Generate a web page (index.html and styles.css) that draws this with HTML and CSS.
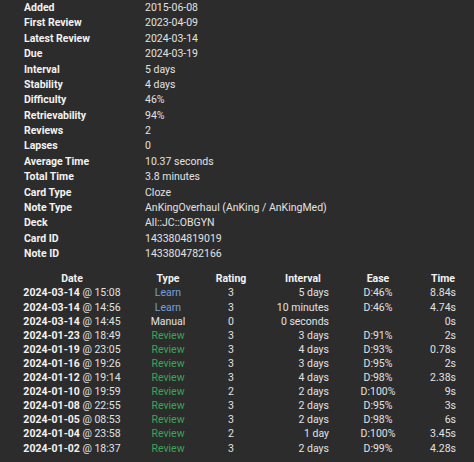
FILE: index.html
```html
<!DOCTYPE html>
<html>
<head>
<meta charset="utf-8">
<link rel="stylesheet" href="styles.css">
</head>
<body>
<div class="page">
  <div class="info">
    <div class="k">Added</div><div class="v">2015-06-08</div>
    <div class="k">First Review</div><div class="v">2023-04-09</div>
    <div class="k">Latest Review</div><div class="v">2024-03-14</div>
    <div class="k">Due</div><div class="v">2024-03-19</div>
    <div class="k">Interval</div><div class="v">5 days</div>
    <div class="k">Stability</div><div class="v">4 days</div>
    <div class="k">Difficulty</div><div class="v">46%</div>
    <div class="k">Retrievability</div><div class="v">94%</div>
    <div class="k">Reviews</div><div class="v">2</div>
    <div class="k">Lapses</div><div class="v">0</div>
    <div class="k">Average Time</div><div class="v">10.37 seconds</div>
    <div class="k">Total Time</div><div class="v">3.8 minutes</div>
    <div class="k">Card Type</div><div class="v">Cloze</div>
    <div class="k">Note Type</div><div class="v">AnKingOverhaul (AnKing / AnKingMed)</div>
    <div class="k">Deck</div><div class="v">All::JC::OBGYN</div>
    <div class="k">Card ID</div><div class="v">1433804819019</div>
    <div class="k">Note ID</div><div class="v">1433804782166</div>
  </div>

  <table class="revlog">
    <colgroup>
      <col class="c-date"><col class="c-type"><col class="c-rating"><col class="c-int"><col class="c-ease"><col class="c-time">
    </colgroup>
    <thead>
      <tr><th>Date</th><th>Type</th><th>Rating</th><th class="h-int">Interval</th><th>Ease</th><th class="h-time">Time</th></tr>
    </thead>
    <tbody>
      <tr><td class="date"><b>2024-03-14</b> @ 15:08</td><td class="learn">Learn</td><td>3</td><td class="int">5 days</td><td>D:46%</td><td class="time">8.84s</td></tr>
      <tr><td class="date"><b>2024-03-14</b> @ 14:56</td><td class="learn">Learn</td><td>3</td><td class="int">10 minutes</td><td>D:46%</td><td class="time">4.74s</td></tr>
      <tr><td class="date"><b>2024-03-14</b> @ 14:45</td><td>Manual</td><td>0</td><td class="int">0 seconds</td><td></td><td class="time">0s</td></tr>
      <tr><td class="date"><b>2024-01-23</b> @ 18:49</td><td class="review">Review</td><td>3</td><td class="int">3 days</td><td>D:91%</td><td class="time">2s</td></tr>
      <tr><td class="date"><b>2024-01-19</b> @ 23:05</td><td class="review">Review</td><td>3</td><td class="int">4 days</td><td>D:93%</td><td class="time">0.78s</td></tr>
      <tr><td class="date"><b>2024-01-16</b> @ 19:26</td><td class="review">Review</td><td>3</td><td class="int">3 days</td><td>D:95%</td><td class="time">2s</td></tr>
      <tr><td class="date"><b>2024-01-12</b> @ 19:14</td><td class="review">Review</td><td>3</td><td class="int">4 days</td><td>D:98%</td><td class="time">2.38s</td></tr>
      <tr><td class="date"><b>2024-01-10</b> @ 19:59</td><td class="review">Review</td><td>2</td><td class="int">2 days</td><td>D:100%</td><td class="time">9s</td></tr>
      <tr><td class="date"><b>2024-01-08</b> @ 22:55</td><td class="review">Review</td><td>3</td><td class="int">2 days</td><td>D:95%</td><td class="time">3s</td></tr>
      <tr><td class="date"><b>2024-01-05</b> @ 08:53</td><td class="review">Review</td><td>3</td><td class="int">2 days</td><td>D:98%</td><td class="time">6s</td></tr>
      <tr><td class="date"><b>2024-01-04</b> @ 23:58</td><td class="review">Review</td><td>2</td><td class="int">1 day</td><td>D:100%</td><td class="time">3.45s</td></tr>
      <tr><td class="date"><b>2024-01-02</b> @ 18:37</td><td class="review">Review</td><td>3</td><td class="int">2 days</td><td>D:99%</td><td class="time">4.28s</td></tr>
    </tbody>
  </table>
</div>
</body>
</html>
```

FILE: styles.css
```css
html, body {
  margin: 0;
  padding: 0;
  background: #2c2c2c;
}
body {
  font-family: Roboto, "Liberation Sans", sans-serif;
  font-size: 10.5px;
  color: #e6e6e6;
}
.page {
  padding: 0 8px 0 16px;
}
.info {
  display: grid;
  grid-template-columns: 121px auto;
  padding-left: 8px;
  line-height: 15.375px;
}
.info .k {
  font-weight: bold;
  color: #f2f2f2;
}
.info .v {
  color: #e2e2e2;
}
.revlog {
  margin-top: 11px;
  border-collapse: collapse;
  table-layout: fixed;
  width: 450px;
}
.c-date { width: 112px; }
.c-type { width: 80px; }
.c-rating { width: 46px; }
.c-int { width: 92px; }
.c-ease { width: 64px; }
.c-time { width: 56px; }
.revlog th, .revlog td {
  padding: 0;
  height: 14.1px;
  line-height: 14.1px;
  text-align: center;
  white-space: nowrap;
}
.revlog th {
  font-weight: bold;
  color: #f2f2f2;
}
.revlog td {
  color: #e2e2e2;
}
.revlog td.date b {
  color: #f2f2f2;
}
.h-int { padding-left: 6px !important; }
.h-time { padding-left: 10px !important; }
.revlog td.int {
  text-align: right;
  padding-right: 17px;
}
.revlog td.time {
  text-align: right;
  padding-right: 10px;
}
.learn { color: #74a0da !important; }
.review { color: #3aa55a !important; }
```
